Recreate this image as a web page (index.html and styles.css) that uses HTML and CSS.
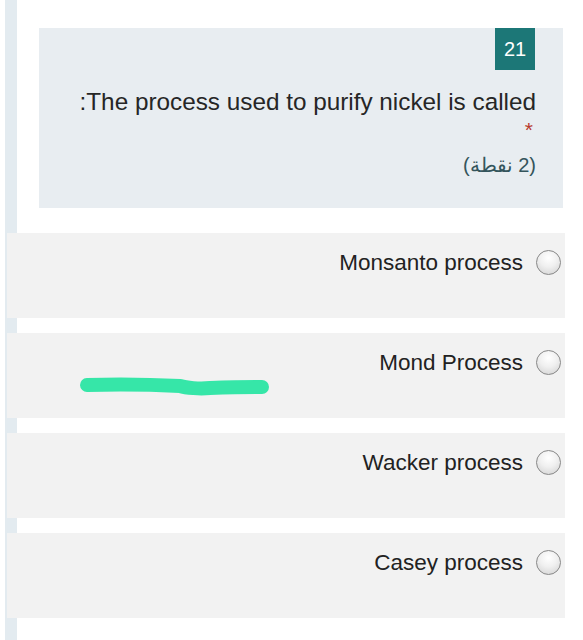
FILE: index.html
```html
<!DOCTYPE html>
<html lang="ar" dir="rtl">
<head>
<meta charset="utf-8">
<title>Question 21</title>
<link rel="stylesheet" href="styles.css">
</head>
<body>
<main class="page">
  <section class="question">
    <div class="badge">21</div>
    <p class="q-text">The process used to purify nickel is called:</p>
    <div class="required">*</div>
    <div class="points">(2 نقطة)</div>
  </section>

  <label class="option">
    <span class="radio"></span>
    <span class="opt-text" dir="ltr">Monsanto process</span>
  </label>
  <label class="option">
    <span class="radio"></span>
    <span class="opt-text" dir="ltr">Mond Process</span>
    <svg class="marker" width="200" height="24" viewBox="0 0 200 24" aria-hidden="true">
      <path d="M7 10 C40 9 80 10 100 11 C106 13 120 14 130 13 C160 12 172 12 182 12" fill="none" stroke="#36e6a8" stroke-width="14" stroke-linecap="round" stroke-linejoin="round"/>
    </svg>
  </label>
  <label class="option">
    <span class="radio"></span>
    <span class="opt-text" dir="ltr">Wacker process</span>
  </label>
  <label class="option">
    <span class="radio"></span>
    <span class="opt-text" dir="ltr">Casey process</span>
  </label>
</main>
</body>
</html>
```

FILE: styles.css
```css
html, body {
  margin: 0;
  padding: 0;
}

body {
  width: 583px;
  min-height: 640px;
  font-family: "Liberation Sans", Arial, "Noto Sans", sans-serif;
  color: #222;
  background: linear-gradient(to right, #fff 0, #fff 5px, #e3ebf0 5px, #e3ebf0 17px, #fff 17px) no-repeat;
  background-size: 100% 640px;
}

.page {
  display: flex;
  flex-direction: column;
  align-items: stretch;
  padding-top: 28px;
  gap: 15px;
}

.question {
  box-sizing: border-box;
  height: 180px;
  margin: 0 20px 10px 39px;
  background: #e8edf1;
  padding-right: 27px;
  display: flex;
  flex-direction: column;
  align-items: flex-start;
}

.badge {
  width: 40px;
  height: 42px;
  margin-right: 1px;
  background: #1c7777;
  color: #fff;
  font-size: 20px;
  display: flex;
  align-items: center;
  justify-content: center;
}

.q-text {
  margin: 18px 0 0 0;
  font-size: 24.3px;
  line-height: 28px;
  color: #262626;
}

.required {
  margin-top: 4px;
  color: #b83a2e;
  font-size: 21px;
  line-height: 20px;
  padding-right: 3px;
}

.points {
  margin-top: 13px;
  font-size: 20px;
  line-height: 24px;
  color: #34555c;
}

.option {
  position: relative;
  box-sizing: border-box;
  height: 85px;
  margin: 0 18px 0 7px;
  background: #f2f2f2;
  padding: 17px 4px 0 0;
  display: flex;
  align-items: flex-start;
  gap: 13px;
}

.radio {
  flex: none;
  width: 23px;
  height: 23px;
  border: 1.5px solid #888;
  border-radius: 50%;
  background: radial-gradient(circle at 50% 30%, #ffffff 0%, #f0f0f0 45%, #d0d0d0 100%);
  margin-top: 0;
}

.opt-text {
  font-size: 22.5px;
  line-height: 26px;
  color: #222;
}

.marker {
  position: absolute;
  left: 73px;
  top: 42px;
}
```
